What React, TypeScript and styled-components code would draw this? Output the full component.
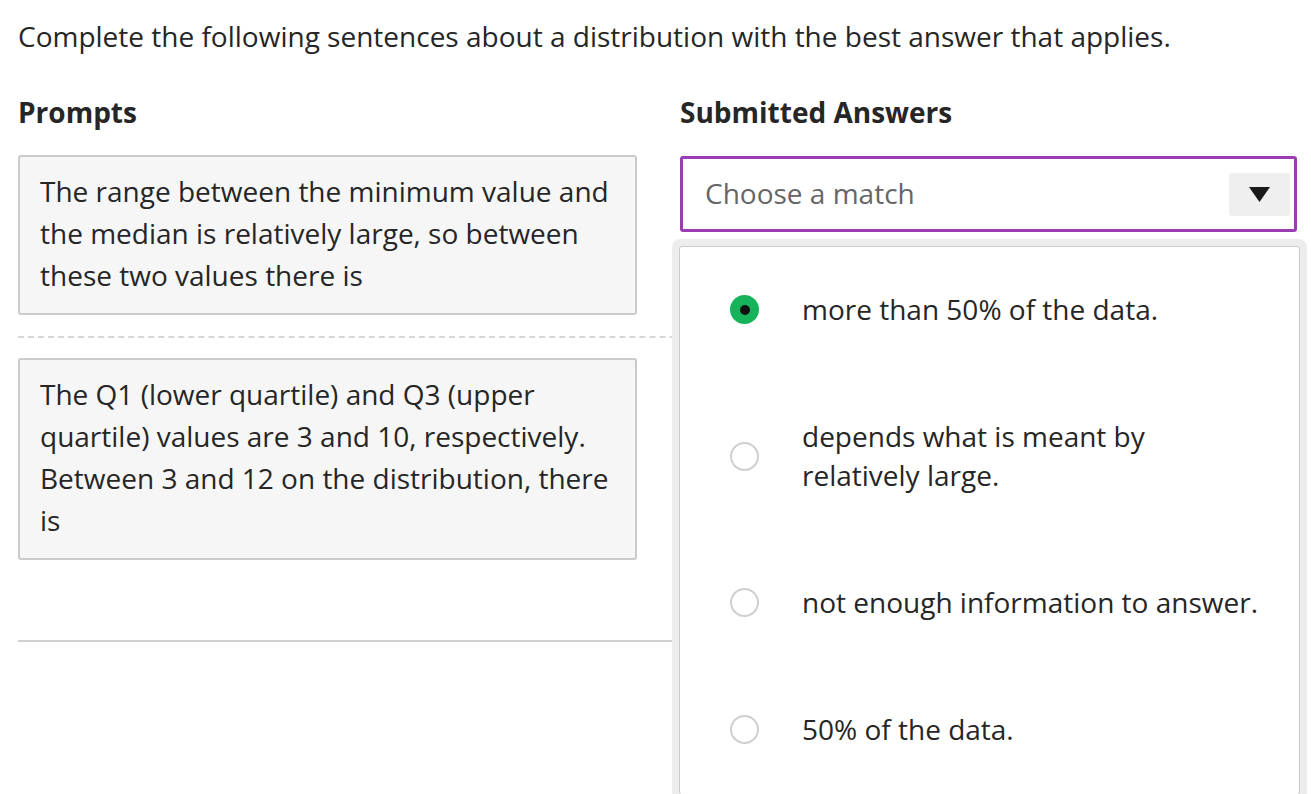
import React from "react";
import styled, { createGlobalStyle } from "styled-components";

const Global = createGlobalStyle`
  html, body { margin: 0; padding: 0; background: #ffffff; }
  body { font-family: "Open Sans", "Noto Sans", "Liberation Sans", sans-serif; color: #262626; }
  * { box-sizing: border-box; }
`;

const Page = styled.div`
  padding: 16px 0 0 18px;
  width: 1311px;
  height: 794px;
  overflow: hidden;
`;

const Title = styled.p`
  margin: 0;
  font-size: 28px;
  line-height: 40px;
  color: #262626;
`;

const Table = styled.div`
  margin-top: 36px;
  display: grid;
  grid-template-columns: 619px 617px;
  column-gap: 43px;
`;

const Heading = styled.h2`
  margin: 0;
  font-size: 28px;
  line-height: 40px;
  font-weight: 700;
  color: #262626;
`;

const HeaderRow = styled.div`
  display: contents;
`;

const Row = styled.div<{ $last?: boolean }>`
  grid-column: 1 / -1;
  display: grid;
  grid-template-columns: 619px 617px;
  column-gap: 43px;
  align-items: start;
  padding: ${(p) => (p.$last ? "20px 0 80px" : "23px 0 21px")};
  border-bottom: ${(p) => (p.$last ? "2px solid #d0d0d0" : "2px dashed #d6d6d6")};
`;

const PromptBox = styled.div`
  background: #f6f6f6;
  border: 2px solid #cbcbcb;
  border-radius: 3px;
  padding: 13px 20px 17px;
  font-size: 28px;
  line-height: 42px;
  color: #262626;
`;

const AnswerCell = styled.div`
  position: relative;
`;

const Select = styled.div`
  height: 76px;
  border: 3px solid #9b3cb3;
  border-radius: 3px;
  background: #fff;
  display: flex;
  align-items: center;
  justify-content: space-between;
  padding: 0 4px 0 22px;
  margin-top: 1px;
`;

const Placeholder = styled.span`
  font-size: 28px;
  color: #666666;
  margin-top: -2px;
`;

const ArrowButton = styled.span`
  width: 61px;
  height: 43px;
  background: #efefef;
  border-radius: 3px;
  display: flex;
  align-items: center;
  justify-content: center;
`;

const Menu = styled.div`
  position: absolute;
  top: 84px;
  left: -8px;
  width: 635px;
  padding: 7px;
  background: #ededed;
  border-radius: 8px;
  z-index: 10;
`;

const MenuInner = styled.ul`
  margin: 0;
  padding: 0;
  list-style: none;
  background: #fff;
  border: 1px solid #cccccc;
  border-radius: 3px;
`;

const Option = styled.li`
  display: flex;
  align-items: center;
  gap: 43px;
  padding: 43px 20px 45px 50px;
  font-size: 28px;
  line-height: 39px;
  color: #262626;
`;

const Radio = styled.span<{ $checked?: boolean }>`
  flex: none;
  width: 29px;
  height: 29px;
  border-radius: 50%;
  border: ${(p) => (p.$checked ? "none" : "2px solid #cfcfcf")};
  background: ${(p) => (p.$checked ? "#17b35a" : "#fff")};
  display: flex;
  align-items: center;
  justify-content: center;
  &::after {
    content: "";
    display: ${(p) => (p.$checked ? "block" : "none")};
    width: 10px;
    height: 10px;
    border-radius: 50%;
    background: #111;
  }
`;

const options = [
  { text: "more than 50% of the data.", checked: true },
  { text: "depends what is meant by relatively large.", checked: false },
  { text: "not enough information to answer.", checked: false },
  { text: "50% of the data.", checked: false },
];

const OptionText = styled.span`
  max-width: 462px;
`;

function Arrow() {
  return (
    <svg width="21" height="15" viewBox="0 0 21 15" aria-hidden="true">
      <polygon points="0,0 21,0 10.5,15" fill="#1a1a1a" />
    </svg>
  );
}

export default function App() {
  return (
    <>
      <Global />
      <Page>
        <Title>Complete the following sentences about a distribution with the best answer that applies.</Title>
        <Table>
          <HeaderRow>
            <Heading>Prompts</Heading>
            <Heading>Submitted Answers</Heading>
          </HeaderRow>
          <Row>
            <PromptBox>
              The range between the minimum value and the median is relatively large, so between these two values there is
            </PromptBox>
            <AnswerCell>
              <Select>
                <Placeholder>Choose a match</Placeholder>
                <ArrowButton>
                  <Arrow />
                </ArrowButton>
              </Select>
              <Menu>
                <MenuInner>
                  {options.map((o) => (
                    <Option key={o.text}>
                      <Radio $checked={o.checked} />
                      <OptionText>{o.text}</OptionText>
                    </Option>
                  ))}
                </MenuInner>
              </Menu>
            </AnswerCell>
          </Row>
          <Row $last>
            <PromptBox>
              The Q1 (lower quartile) and Q3 (upper quartile) values are 3 and 10, respectively. Between 3 and 12 on the distribution, there is
            </PromptBox>
            <AnswerCell>
              <Select>
                <Placeholder>Choose a match</Placeholder>
                <ArrowButton>
                  <Arrow />
                </ArrowButton>
              </Select>
            </AnswerCell>
          </Row>
        </Table>
      </Page>
    </>
  );
}
